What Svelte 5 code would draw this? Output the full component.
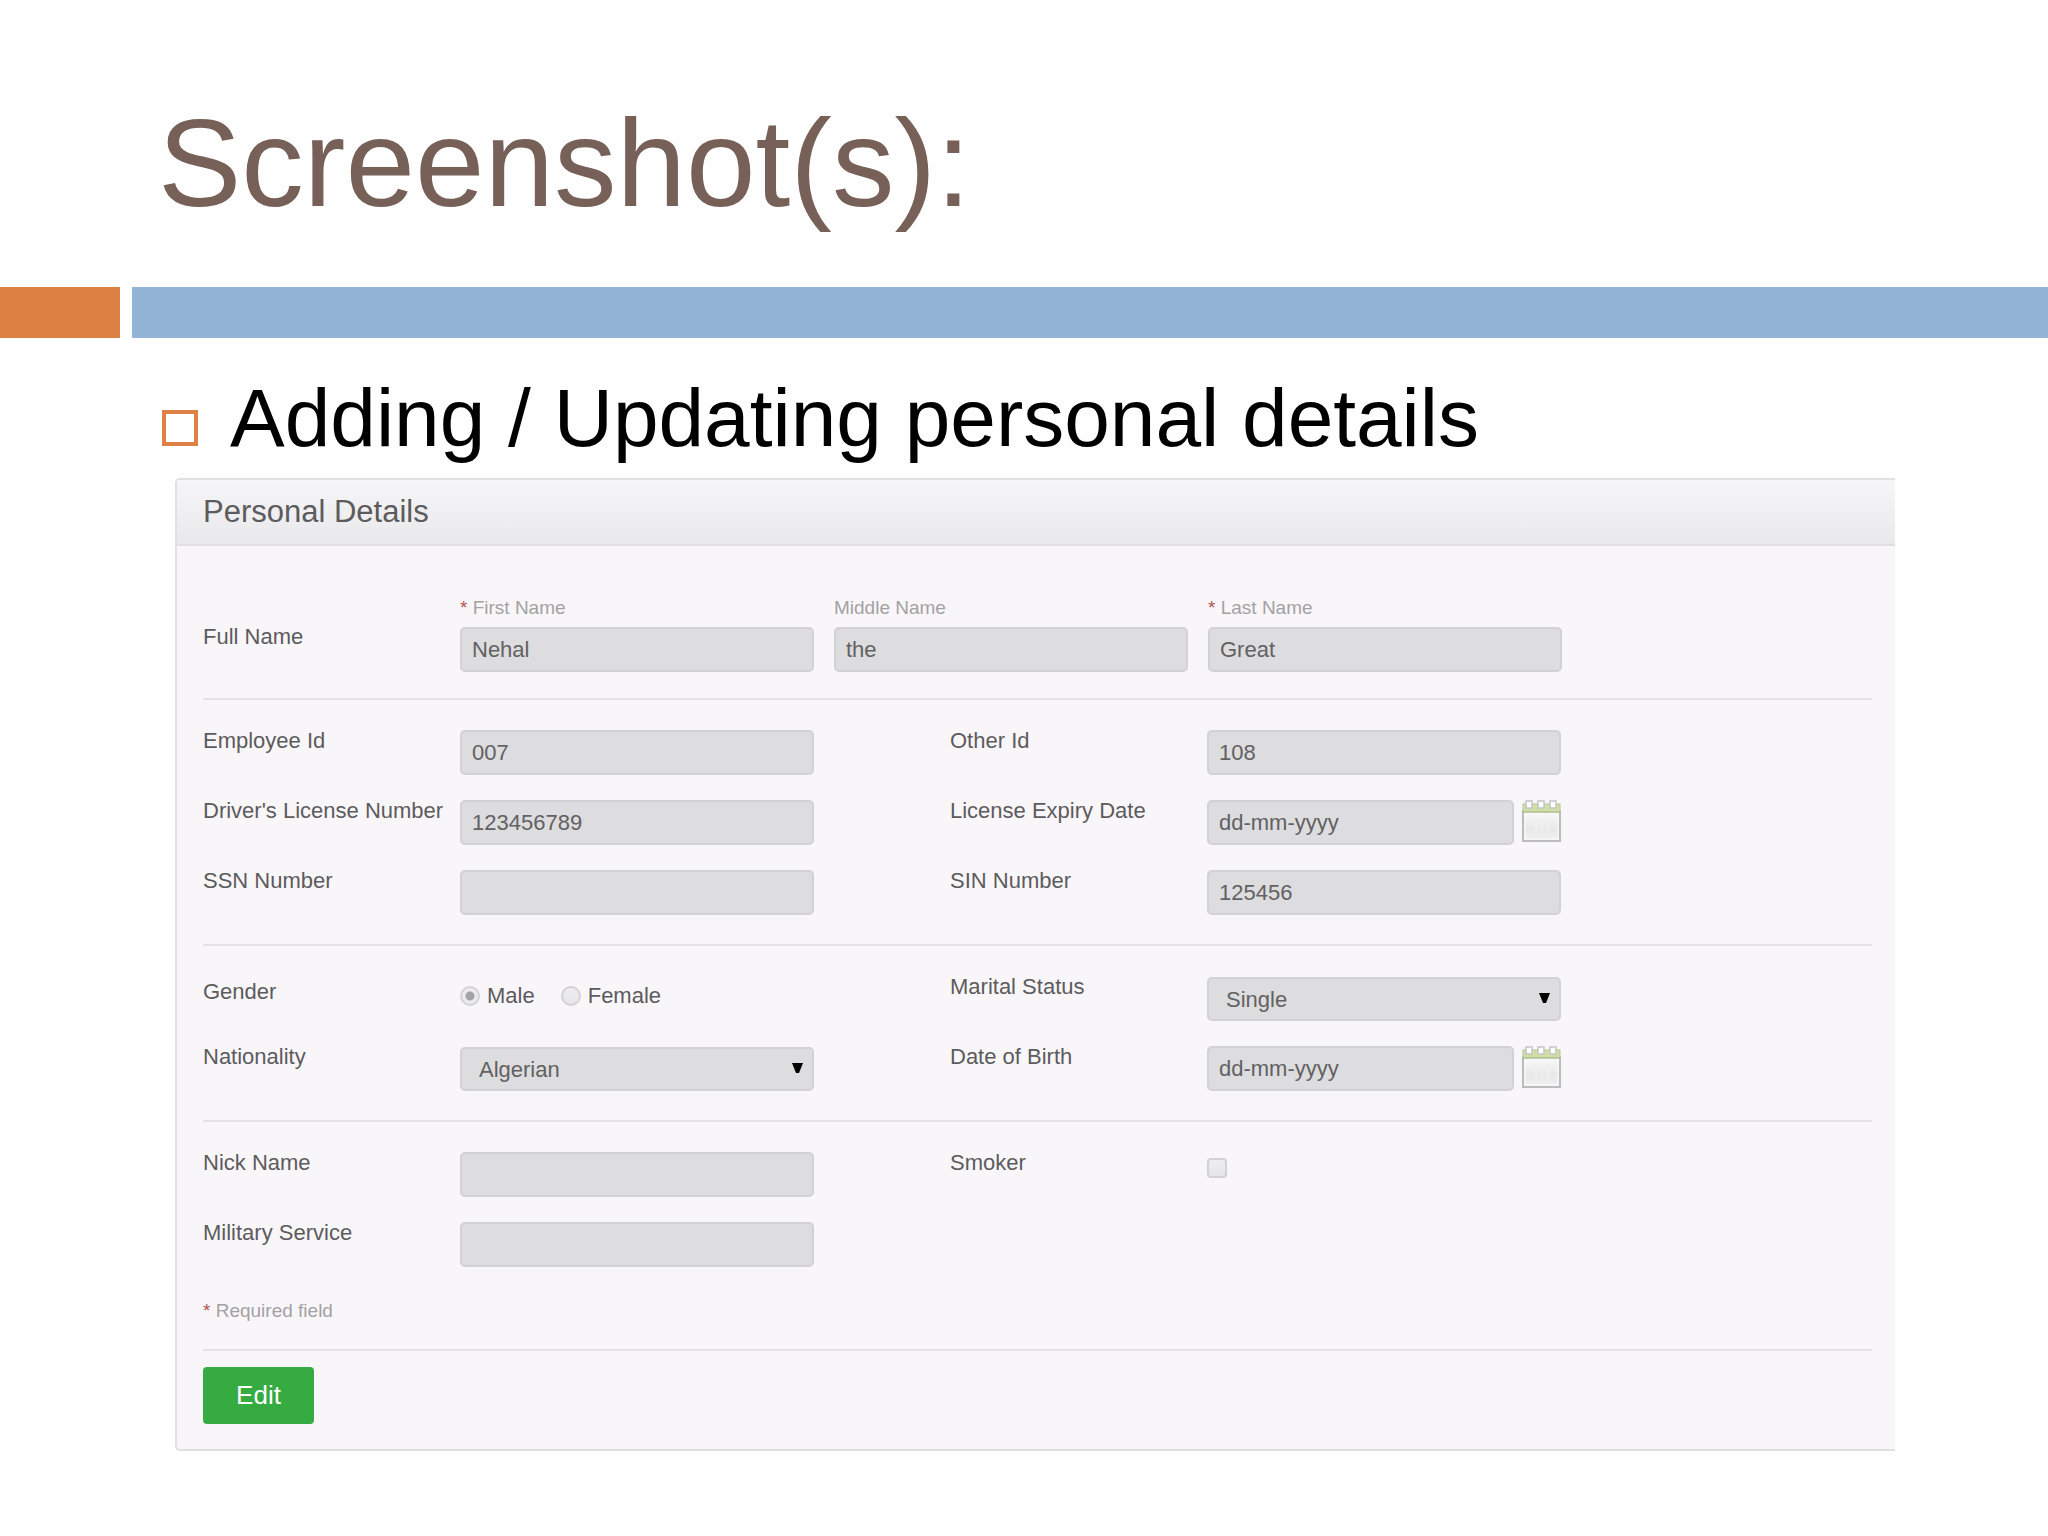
<script lang="ts">
  interface Person {
    firstName: string;
    middleName: string;
    lastName: string;
    employeeId: string;
    otherId: string;
    licenseNumber: string;
    licenseExpiry: string;
    ssn: string;
    sin: string;
    gender: string;
    maritalStatus: string;
    nationality: string;
    birthDate: string;
    nickName: string;
    smoker: boolean;
    militaryService: string;
  }

  let person: Person = $state({
    firstName: "Nehal",
    middleName: "the",
    lastName: "Great",
    employeeId: "007",
    otherId: "108",
    licenseNumber: "123456789",
    licenseExpiry: "dd-mm-yyyy",
    ssn: "",
    sin: "125456",
    gender: "Male",
    maritalStatus: "Single",
    nationality: "Algerian",
    birthDate: "dd-mm-yyyy",
    nickName: "",
    smoker: false,
    militaryService: "",
  });

  let editing = $state(false);
</script>

{#snippet textField(id, label)}
  <div class="field">
    <label for={id}>{label}</label>
    <input {id} class="control" type="text" bind:value={person[id]} readonly={!editing} />
  </div>
{/snippet}

{#snippet nameField(id, label, required)}
  <div class="name">
    <label class="hint" for={id}>
      {#if required}<em>*</em>{/if}
      {label}
    </label>
    <input {id} class="control" type="text" bind:value={person[id]} readonly={!editing} />
  </div>
{/snippet}

{#snippet dateField(id, label)}
  <div class="field">
    <label for={id}>{label}</label>
    <div class="date">
      <input {id} class="control" type="text" bind:value={person[id]} readonly={!editing} />
      <button class="calendar" type="button" aria-label="Pick a date">
        <svg viewBox="0 0 39 42" width="39" height="42">
          <defs>
            <linearGradient id="{id}-page" x1="0" y1="0" x2="0" y2="1">
              <stop offset="0" stop-color="#fafafa" />
              <stop offset="0.6" stop-color="#e8e8e8" />
              <stop offset="1" stop-color="#f1f1f1" />
            </linearGradient>
          </defs>
          <rect x="1" y="11" width="37" height="30" fill="url(#{id}-page)" stroke="#bcbcbf" stroke-width="2" />
          <path d="M3 13V39M36 13V39M3 39H36" fill="none" stroke="#fbfbfb" stroke-width="1" />
          <path d="M14 18V32M20 18V32M26 18V32" stroke="#efefef" stroke-width="2" />
          <rect x="1" y="4" width="37" height="8" fill="#cfe0a2" stroke="#b9c595" stroke-width="1" />
          <path d="M0 12H39" stroke="#adb894" stroke-width="1" />
          {#each [4, 16, 28] as x}
            <rect {x} y="1" width="6" height="7" fill="#fff" stroke="#c2c4c8" stroke-width="1.5" />
          {/each}
        </svg>
      </button>
    </div>
  </div>
{/snippet}

{#snippet selectField(id, label, options)}
  <div class="field">
    <label for={id}>{label}</label>
    <div class="select">
      <select {id} class="control" bind:value={person[id]} disabled={!editing}>
        {#each options as option}
          <option>{option}</option>
        {/each}
      </select>
      <svg class="arrow" viewBox="0 0 12 10" width="12" height="10" aria-hidden="true">
        <path d="M1 0H12L8 10H5Z" />
      </svg>
    </div>
  </div>
{/snippet}

<div class="slide">
  <h1>Screenshot(s):</h1>

  <div class="bars">
    <span class="bar-accent"></span>
    <span class="bar-main"></span>
  </div>

  <ul>
    <li>Adding / Updating personal details</li>
  </ul>

  <section class="panel">
    <h2>Personal Details</h2>

    <form onsubmit={(e) => e.preventDefault()}>
      <div class="group names">
        <span class="names-label">Full Name</span>
        <div class="name-list">
          {@render nameField("firstName", "First Name", true)}
          {@render nameField("middleName", "Middle Name", false)}
          {@render nameField("lastName", "Last Name", true)}
        </div>
      </div>

      <div class="group">
        {@render textField("employeeId", "Employee Id")}
        {@render textField("otherId", "Other Id")}
        {@render textField("licenseNumber", "Driver's License Number")}
        {@render dateField("licenseExpiry", "License Expiry Date")}
        {@render textField("ssn", "SSN Number")}
        {@render textField("sin", "SIN Number")}
      </div>

      <div class="group">
        <div class="field gender" role="radiogroup" aria-labelledby="gender-label">
          <span id="gender-label">Gender</span>
          <div class="radios">
            {#each ["Male", "Female"] as option}
              <label>
                <input type="radio" name="gender" value={option} bind:group={person.gender} disabled={!editing} />
                {option}
              </label>
            {/each}
          </div>
        </div>
        {@render selectField("maritalStatus", "Marital Status", ["Single", "Married", "Other"])}
        {@render selectField("nationality", "Nationality", ["Afghan", "Albanian", "Algerian", "American"])}
        {@render dateField("birthDate", "Date of Birth")}
      </div>

      <div class="group last">
        {@render textField("nickName", "Nick Name")}
        <div class="field">
          <label for="smoker">Smoker</label>
          <input id="smoker" type="checkbox" bind:checked={person.smoker} disabled={!editing} />
        </div>
        {@render textField("militaryService", "Military Service")}
      </div>

      <p class="hint required"><em>*</em> Required field</p>

      <button class="edit" type="button" onclick={() => (editing = !editing)}>
        {editing ? "Save" : "Edit"}
      </button>
    </form>
  </section>
</div>

<style>
  :global(body) {
    margin: 0;
    background: #fefefe;
  }

  .slide {
    padding-bottom: 84px;
    font-family: "Liberation Sans", Arial, sans-serif;
    color: #5c5b5d;
  }

  h1 {
    margin: 0;
    padding: 91px 158px 52px;
    font-size: 125px;
    line-height: 144px;
    font-weight: 400;
    color: #776057;
  }

  .bars {
    display: flex;
    gap: 12px;
    height: 51px;
  }

  .bar-accent {
    width: 120px;
    background: #dd8044;
  }

  .bar-main {
    flex: 1;
    background: #94b4d7;
  }

  ul {
    margin: 0;
    padding: 32px 162px 12px;
    list-style: none;
  }

  li {
    display: flex;
    align-items: baseline;
    gap: 32px;
    font-size: 82px;
    line-height: 96px;
    color: #000;
  }

  li::before {
    content: "";
    box-sizing: border-box;
    width: 36px;
    height: 36px;
    border: 4px solid #dd8044;
  }

  .panel {
    margin: 0 153px 0 175px;
    border: 2px solid #e1dfe2;
    border-right: 0;
    border-radius: 5px 0 0 5px;
    background: #f9f6f9;
  }

  h2 {
    margin: 0;
    padding: 0 26px;
    border-bottom: 2px solid #e1dfe2;
    background: linear-gradient(#f6f5f7, #e9e8ea);
    font-size: 31px;
    line-height: 64px;
    font-weight: 400;
  }

  form {
    padding: 20px 23px 25px 26px;
    font-size: 22px;
    line-height: 22px;
  }

  .group {
    display: grid;
    grid-template-columns: 611px 611px;
    column-gap: 136px;
    row-gap: 25px;
    padding: 30px 0 29px;
    border-bottom: 2px solid #e3e1e4;
  }

  .names {
    grid-template-columns: 257px 1fr;
    column-gap: 0;
    padding-bottom: 26px;
  }

  .names-label {
    margin-top: 30px;
  }

  .name-list {
    display: grid;
    grid-template-columns: repeat(3, 354px);
    column-gap: 20px;
  }

  .last {
    padding-bottom: 0;
    border-bottom: 0;
  }

  .field {
    display: grid;
    grid-template-columns: 257px 354px;
    align-items: start;
    min-height: 45px;
  }

  .hint {
    display: block;
    font-size: 19px;
    line-height: 24px;
    color: #a3a1a4;
  }

  .name .hint {
    margin-bottom: 7px;
  }

  .hint em {
    font-style: normal;
    color: #b0574f;
  }

  .control {
    box-sizing: border-box;
    display: block;
    width: 100%;
    height: 45px;
    margin: 0;
    padding: 1px 10px 0;
    border: 2px solid #d2d1d4;
    border-radius: 5px;
    background: #dddcde;
    font: inherit;
    line-height: 28px;
    color: #626163;
    outline: 0;
  }

  .select {
    position: relative;
    padding-top: 1px;
  }

  select.control {
    height: 44px;
    padding: 2px 17px 0;
    appearance: none;
    opacity: 1;
  }

  .arrow {
    position: absolute;
    top: 17px;
    right: 11px;
    pointer-events: none;
  }

  .date {
    display: flex;
    gap: 8px;
    align-items: start;
  }

  .calendar {
    display: flex;
    padding: 0;
    border: 0;
    background: none;
  }

  .gender {
    box-sizing: border-box;
    padding-top: 5px;
  }

  .radios {
    display: flex;
    gap: 26px;
    padding-top: 4px;
  }

  .radios label {
    display: flex;
    align-items: center;
    gap: 7px;
  }

  input[type="radio"],
  input[type="checkbox"] {
    appearance: none;
    box-sizing: border-box;
    width: 20px;
    height: 20px;
    margin: 0;
    border: 2px solid #d2d1d3;
    background: linear-gradient(#eeedef, #e6e5e7);
  }

  input[type="radio"] {
    border-radius: 50%;
  }

  input[type="radio"]:checked {
    background: radial-gradient(circle, #a3a2a4 4px, #ebeaec 5px);
  }

  input[type="checkbox"] {
    margin-top: 6px;
    border-radius: 4px;
  }

  input[type="checkbox"]:checked {
    background: #a3a2a4;
  }

  .required {
    margin: 0 0 16px;
    padding: 32px 0 26px;
    border-bottom: 2px solid #e3e1e4;
  }

  .edit {
    display: block;
    min-width: 111px;
    height: 57px;
    padding: 0 24px 1px;
    border: 0;
    border-radius: 4px;
    background: #35ab42;
    font: inherit;
    font-size: 26px;
    color: #fff;
  }
</style>
